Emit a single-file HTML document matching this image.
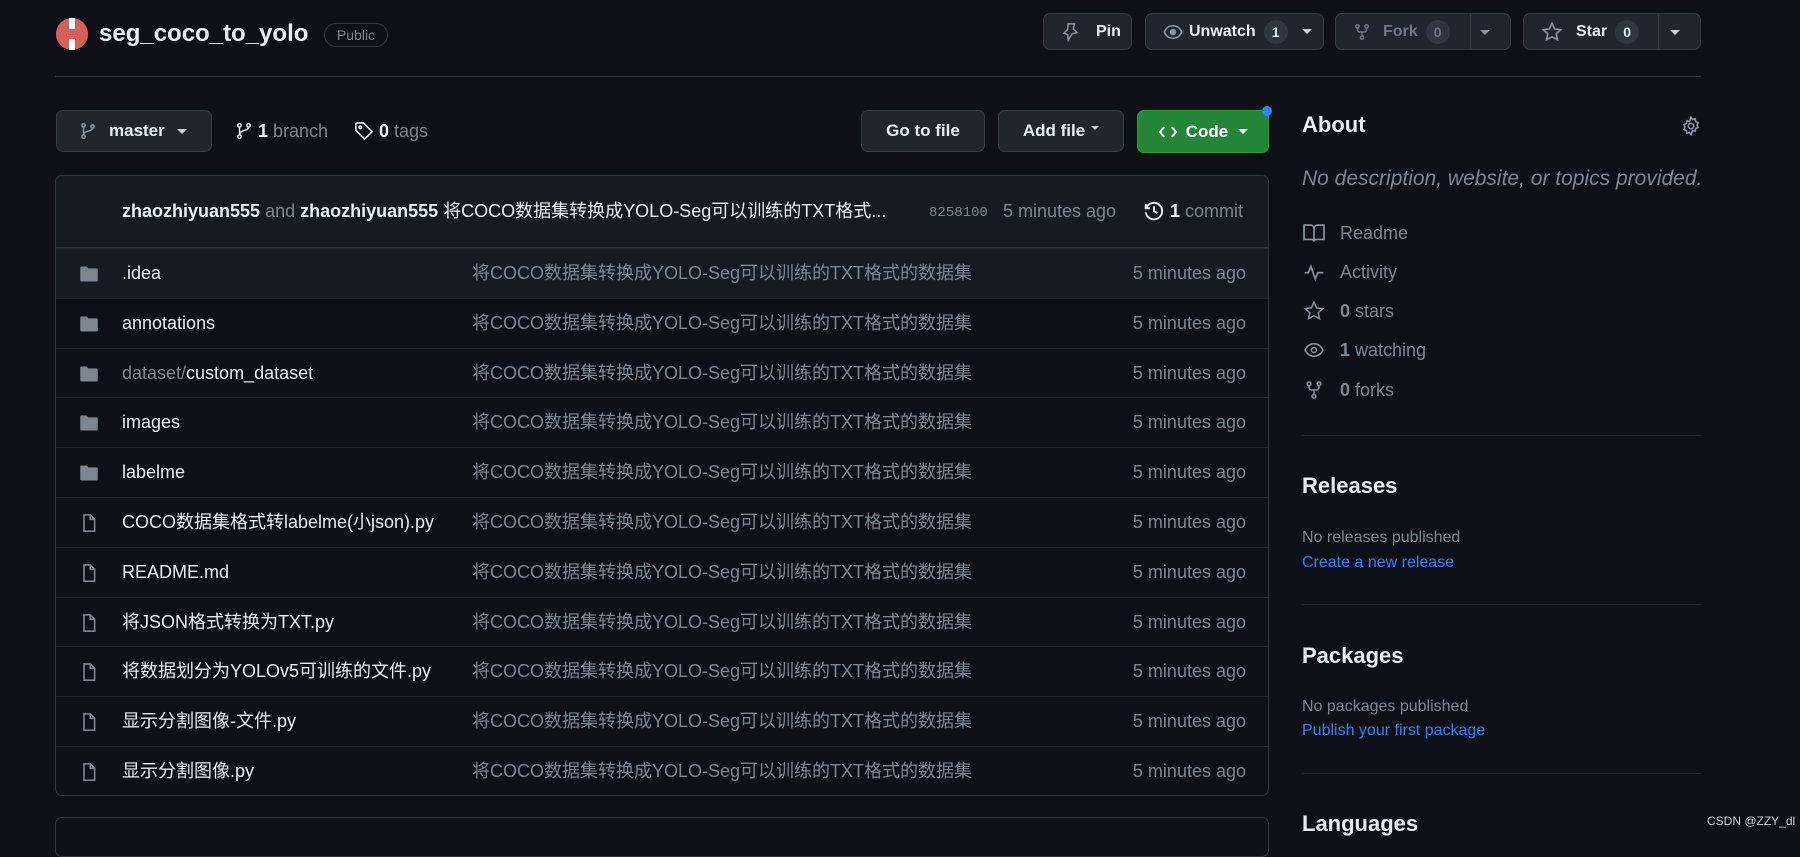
<!DOCTYPE html>
<html><head><meta charset="utf-8"><style>
*{box-sizing:border-box;margin:0;padding:0}
body{width:1800px;height:833px;overflow:hidden;background:#0d1117;color:#e6edf3;font-family:"Liberation Sans","Noto Sans CJK SC",sans-serif;position:relative;line-height:22px}
.a{position:absolute}
.btn{position:absolute;background:#21262d;border:1px solid #363b42;border-radius:7px;display:flex;align-items:center;font-size:16px;font-weight:bold;color:#e6edf3}
.cnt{display:inline-block;background:#30363d;border-radius:12px;min-width:24px;height:24px;line-height:24px;text-align:center;font-size:14px;margin-left:8px}
.caret{width:0;height:0;border-left:5px solid transparent;border-right:5px solid transparent;border-top:5px solid #c9d1d9;display:inline-block}
.box{position:absolute;left:55px;top:175px;width:1214px;height:621px;border:1px solid #30363d;border-radius:7px;overflow:hidden}
.hdr{height:72px;background:#161b22;border-bottom:1px solid #30363d;position:relative;font-size:18px}
.row{height:49.8px;border-top:1px solid #21262d;position:relative;font-size:18px}
.row:first-of-type{border-top:none}
.row .n,.row .m,.row .t{position:absolute;top:13px;height:22px;line-height:22px;white-space:nowrap}
.row .n{left:66px;color:#e6edf3}
.row .m{left:416px;color:#7d8590}
.row .t{right:22px;color:#7d8590}
.row svg{position:absolute;left:22px;top:15px}
.side{position:absolute;left:1302px;font-size:18px;color:#7d8590}
.side svg{position:absolute;left:0;top:1px}
.side span{position:absolute;left:38px;top:0;white-space:nowrap}
.hr{position:absolute;left:1302px;width:399px;height:1px;background:#21262d}
h2{position:absolute;left:1302px;font-size:22px;font-weight:bold;color:#e6edf3}
</style></head><body>
<svg class="a" style="left:56px;top:18px" width="32" height="32" viewBox="0 0 32 32"><circle cx="16" cy="16" r="16" fill="#d9605a"/><rect x="13" y="0" width="6" height="11" fill="#fff"/><rect x="13" y="21" width="6" height="11" fill="#fff"/></svg>
<div class="a" style="left:99px;top:20px;font-size:24px;line-height:28px;font-weight:bold;color:#e6edf3">seg_coco_to_yolo</div>
<div class="a" style="left:324px;top:23px;width:64px;height:24px;border:1px solid #30363d;border-radius:12px;font-size:14px;color:#7d8590;text-align:center;line-height:22px">Public</div>

<div class="btn" style="left:1043px;top:13px;width:89px;height:37px;padding-left:18px"><svg width="20" height="20" viewBox="0 0 16 16" fill="none" stroke="#8b949e" stroke-width="1.2"><path d="M5 1.5l5 0-1 4 3 3-4 1-3 5-0.5-4.5L1.5 9 4.5 6z"/></svg><span style="margin-left:14px">Pin</span></div>
<div class="btn" style="left:1145px;top:13px;width:179px;height:37px;padding-left:17px"><svg width="20" height="20" viewBox="0 0 16 16" fill="none" stroke="#8b949e" stroke-width="1.3"><path d="M1 8c2-4 4-5 7-5s5 1 7 5c-2 4-4 5-7 5s-5-1-7-5z"/><circle cx="8" cy="8" r="2" fill="#8b949e"/></svg><span style="margin-left:6px">Unwatch</span><span class="cnt">1</span><span class="caret" style="margin-left:14px"></span></div>
<div class="btn" style="left:1335px;top:13px;width:176px;height:37px;padding-left:17px;color:#6e7681"><svg width="18" height="20" viewBox="0 0 16 16" fill="none" stroke="#6e7681" stroke-width="1.3"><circle cx="4" cy="3" r="1.5"/><circle cx="12" cy="3" r="1.5"/><circle cx="8" cy="13" r="1.5"/><path d="M4 4.5v1.5c0 1 1 2 2 2h4c1 0 2-1 2-2V4.5M8 8v3.5"/></svg><span style="margin-left:12px">Fork</span><span class="cnt" style="color:#6e7681">0</span><span style="position:absolute;left:77%;top:0;width:1px;height:35px;background:#363b42"></span><span class="caret" style="position:absolute;right:20px;top:16px;border-top-color:#8b949e"></span></div>
<div class="btn" style="left:1523px;top:13px;width:178px;height:37px;padding-left:18px"><svg width="20" height="20" viewBox="0 0 16 16" fill="none" stroke="#8b949e" stroke-width="1.3"><path d="M8 1l2.1 4.5 4.9.6-3.6 3.3 1 4.8L8 11.8 3.6 14.2l1-4.8L1 6.1l4.9-.6z"/></svg><span style="margin-left:14px">Star</span><span class="cnt">0</span><span style="position:absolute;left:76%;top:0;width:1px;height:35px;background:#363b42"></span><span class="caret" style="position:absolute;right:20px;top:16px"></span></div>

<div class="a" style="left:55px;top:76px;width:1646px;height:1px;background:#30363d"></div>

<div class="btn" style="left:56px;top:110px;width:156px;height:42px;padding-left:22px"><svg width="18" height="20" viewBox="0 0 16 16" fill="none" stroke="#8b949e" stroke-width="1.3"><circle cx="4" cy="3" r="1.5"/><circle cx="4" cy="13" r="1.5"/><circle cx="12" cy="4" r="1.5"/><path d="M4 4.5v7M12 5.5c0 3-8 2-8 6"/></svg><span style="margin-left:12px;font-size:17px">master</span><span class="caret" style="margin-left:12px"></span></div>
<div class="a" style="left:235px;top:120px;font-size:18px;color:#7d8590;display:flex;align-items:center"><svg width="18" height="20" viewBox="0 0 16 16" fill="none" stroke="#e6edf3" stroke-width="1.3"><circle cx="4" cy="3" r="1.5"/><circle cx="4" cy="13" r="1.5"/><circle cx="12" cy="3" r="1.5"/><path d="M4 4.5v7M12 4.5c0 4-8 2-8 7"/></svg><b style="color:#e6edf3;margin-left:5px">1</b>&nbsp;branch</div>
<div class="a" style="left:354px;top:120px;font-size:18px;color:#7d8590;display:flex;align-items:center"><svg width="20" height="20" viewBox="0 0 16 16" fill="none" stroke="#e6edf3" stroke-width="1.3"><path d="M1.5 2.5v5l7 7 6-6-7-7h-5z"/><circle cx="5" cy="5" r="1"/></svg><b style="color:#e6edf3;margin-left:5px">0</b>&nbsp;tags</div>

<div class="btn" style="left:861px;top:110px;width:124px;height:42px;justify-content:center;font-size:17px">Go to file</div>
<div class="btn" style="left:998px;top:110px;width:126px;height:42px;justify-content:center;font-size:17px">Add file<span class="caret" style="margin-left:6px;margin-top:-6px;border-width:4px 4px 0 4px"></span></div>
<div class="btn" style="left:1137px;top:110px;width:132px;height:43px;justify-content:center;background:#238636;border-color:#2e9a40;font-size:17px"><svg width="20" height="20" viewBox="0 0 16 16" fill="none" stroke="#fff" stroke-width="1.5"><path d="M5 4L1.5 8 5 12M11 4l3.5 4L11 12"/></svg><span style="margin-left:8px;color:#fff">Code</span><span class="caret" style="margin-left:10px;border-top-color:#fff"></span></div>
<div class="a" style="left:1262px;top:106px;width:10px;height:10px;border-radius:5px;background:#2f81f7"></div>

<div class="box">
<div class="hdr">
<div class="a" style="left:66px;top:24px;white-space:nowrap;height:22px;line-height:22px"><b>zhaozhiyuan555</b> <span style="color:#7d8590">and</span> <b>zhaozhiyuan555</b> 将COCO数据集转换成YOLO-Seg可以训练的TXT格式...</div>
<div class="a" style="left:873px;top:26px;font-family:'Liberation Mono',monospace;font-size:14px;color:#7d8590">8258100</div>
<div class="a" style="left:947px;top:24px;color:#7d8590">5 minutes ago</div>
<svg class="a" style="left:1087px;top:24px" width="22" height="22" viewBox="0 0 16 16" fill="none" stroke="#e6edf3" stroke-width="1.4"><path d="M2 3v3h3"/><path d="M2.3 6A6 6 0 1 1 2 9"/><path d="M8 4.5V8l2.5 1.5"/></svg>
<div class="a" style="left:1114px;top:24px;color:#7d8590"><b style="color:#e6edf3">1</b> commit</div>
</div>
<div class="row" style="background:#161b22"><svg width="22" height="20" viewBox="0 0 16 16"><path d="M1 3c0-.6.4-1 1-1h4l1.5 1.5H14c.6 0 1 .4 1 1V13c0 .6-.4 1-1 1H2c-.6 0-1-.4-1-1z" fill="#7d8590"/></svg><div class="n">.idea</div><div class="m">将COCO数据集转换成YOLO-Seg可以训练的TXT格式的数据集</div><div class="t">5 minutes ago</div></div>
<div class="row"><svg width="22" height="20" viewBox="0 0 16 16"><path d="M1 3c0-.6.4-1 1-1h4l1.5 1.5H14c.6 0 1 .4 1 1V13c0 .6-.4 1-1 1H2c-.6 0-1-.4-1-1z" fill="#7d8590"/></svg><div class="n">annotations</div><div class="m">将COCO数据集转换成YOLO-Seg可以训练的TXT格式的数据集</div><div class="t">5 minutes ago</div></div>
<div class="row"><svg width="22" height="20" viewBox="0 0 16 16"><path d="M1 3c0-.6.4-1 1-1h4l1.5 1.5H14c.6 0 1 .4 1 1V13c0 .6-.4 1-1 1H2c-.6 0-1-.4-1-1z" fill="#7d8590"/></svg><div class="n"><span style="color:#7d8590">dataset/</span>custom_dataset</div><div class="m">将COCO数据集转换成YOLO-Seg可以训练的TXT格式的数据集</div><div class="t">5 minutes ago</div></div>
<div class="row"><svg width="22" height="20" viewBox="0 0 16 16"><path d="M1 3c0-.6.4-1 1-1h4l1.5 1.5H14c.6 0 1 .4 1 1V13c0 .6-.4 1-1 1H2c-.6 0-1-.4-1-1z" fill="#7d8590"/></svg><div class="n">images</div><div class="m">将COCO数据集转换成YOLO-Seg可以训练的TXT格式的数据集</div><div class="t">5 minutes ago</div></div>
<div class="row"><svg width="22" height="20" viewBox="0 0 16 16"><path d="M1 3c0-.6.4-1 1-1h4l1.5 1.5H14c.6 0 1 .4 1 1V13c0 .6-.4 1-1 1H2c-.6 0-1-.4-1-1z" fill="#7d8590"/></svg><div class="n">labelme</div><div class="m">将COCO数据集转换成YOLO-Seg可以训练的TXT格式的数据集</div><div class="t">5 minutes ago</div></div>
<div class="row"><svg width="22" height="20" viewBox="0 0 16 16" fill="none" stroke="#7d8590" stroke-width="1.3"><path d="M4 1.5h5l3.5 3.5v9.5H4z M9 1.5V5h3.5"/></svg><div class="n">COCO数据集格式转labelme(小json).py</div><div class="m">将COCO数据集转换成YOLO-Seg可以训练的TXT格式的数据集</div><div class="t">5 minutes ago</div></div>
<div class="row"><svg width="22" height="20" viewBox="0 0 16 16" fill="none" stroke="#7d8590" stroke-width="1.3"><path d="M4 1.5h5l3.5 3.5v9.5H4z M9 1.5V5h3.5"/></svg><div class="n">README.md</div><div class="m">将COCO数据集转换成YOLO-Seg可以训练的TXT格式的数据集</div><div class="t">5 minutes ago</div></div>
<div class="row"><svg width="22" height="20" viewBox="0 0 16 16" fill="none" stroke="#7d8590" stroke-width="1.3"><path d="M4 1.5h5l3.5 3.5v9.5H4z M9 1.5V5h3.5"/></svg><div class="n">将JSON格式转换为TXT.py</div><div class="m">将COCO数据集转换成YOLO-Seg可以训练的TXT格式的数据集</div><div class="t">5 minutes ago</div></div>
<div class="row"><svg width="22" height="20" viewBox="0 0 16 16" fill="none" stroke="#7d8590" stroke-width="1.3"><path d="M4 1.5h5l3.5 3.5v9.5H4z M9 1.5V5h3.5"/></svg><div class="n">将数据划分为YOLOv5可训练的文件.py</div><div class="m">将COCO数据集转换成YOLO-Seg可以训练的TXT格式的数据集</div><div class="t">5 minutes ago</div></div>
<div class="row"><svg width="22" height="20" viewBox="0 0 16 16" fill="none" stroke="#7d8590" stroke-width="1.3"><path d="M4 1.5h5l3.5 3.5v9.5H4z M9 1.5V5h3.5"/></svg><div class="n">显示分割图像-文件.py</div><div class="m">将COCO数据集转换成YOLO-Seg可以训练的TXT格式的数据集</div><div class="t">5 minutes ago</div></div>
<div class="row"><svg width="22" height="20" viewBox="0 0 16 16" fill="none" stroke="#7d8590" stroke-width="1.3"><path d="M4 1.5h5l3.5 3.5v9.5H4z M9 1.5V5h3.5"/></svg><div class="n">显示分割图像.py</div><div class="m">将COCO数据集转换成YOLO-Seg可以训练的TXT格式的数据集</div><div class="t">5 minutes ago</div></div>
</div>
<div class="a" style="left:55px;top:817px;width:1214px;height:40px;border:1px solid #30363d;border-radius:7px"></div>

<h2 style="top:114px">About</h2>
<svg class="a" style="left:1681px;top:116px" width="20" height="20" viewBox="0 0 16 16" fill="none" stroke="#8b949e" stroke-width="1.3"><circle cx="8" cy="8" r="2.2"/><path d="M8 1l1.2 1.8 2.1-.6.4 2.1 2 .9-.9 2 .9 2-2 .9-.4 2.1-2.1-.6L8 15l-1.2-1.8-2.1.6-.4-2.1-2-.9.9-2-.9-2 2-.9.4-2.1 2.1.6z"/></svg>
<div class="a" style="left:1302px;top:168px;font-size:21px;font-style:italic;color:#7d8590;white-space:nowrap">No description, website, or topics provided.</div>
<div class="side" style="top:222px"><svg width="24" height="20" viewBox="0 0 16 14" fill="none" stroke="#8b949e" stroke-width="1.2"><path d="M1 1.5h4.5c1.5 0 2.5 1 2.5 2.5v9c0-1-1-1.5-2-1.5H1zM15 1.5h-4.5C9 1.5 8 2.5 8 4v9c0-1 1-1.5 2-1.5h5z"/></svg><span>Readme</span></div>
<div class="side" style="top:261px"><svg width="24" height="20" viewBox="0 0 16 16" fill="none" stroke="#8b949e" stroke-width="1.3"><path d="M0.5 8.5h3l2-5 3.5 10 2-5h4.5"/></svg><span>Activity</span></div>
<div class="side" style="top:300px"><svg width="24" height="20" viewBox="0 0 16 16" fill="none" stroke="#8b949e" stroke-width="1.2"><path d="M8 1l2.1 4.5 4.9.6-3.6 3.3 1 4.8L8 11.8 3.6 14.2l1-4.8L1 6.1l4.9-.6z"/></svg><span><b>0</b> stars</span></div>
<div class="side" style="top:339px"><svg width="24" height="20" viewBox="0 0 16 16" fill="none" stroke="#8b949e" stroke-width="1.2"><path d="M0.8 8c2-4 4.5-5 7.2-5s5.2 1 7.2 5c-2 4-4.5 5-7.2 5S2.8 12 0.8 8z"/><circle cx="8" cy="8" r="2"/></svg><span><b>1</b> watching</span></div>
<div class="side" style="top:379px"><svg width="24" height="20" viewBox="0 0 16 16" fill="none" stroke="#8b949e" stroke-width="1.2"><circle cx="4" cy="3" r="1.5"/><circle cx="12" cy="3" r="1.5"/><circle cx="8" cy="13" r="1.5"/><path d="M4 4.5v1.5c0 1 1 2 2 2h4c1 0 2-1 2-2V4.5M8 8v3.5"/></svg><span><b>0</b> forks</span></div>
<div class="hr" style="top:435px"></div>
<h2 style="top:475px">Releases</h2>
<div class="a" style="left:1302px;top:527px;font-size:16px;color:#7d8590">No releases published</div>
<div class="a" style="left:1302px;top:552px;font-size:16px;color:#2f81f7">Create a new release</div>
<div class="hr" style="top:604px"></div>
<h2 style="top:645px">Packages</h2>
<div class="a" style="left:1302px;top:696px;font-size:16px;color:#7d8590">No packages published</div>
<div class="a" style="left:1302px;top:720px;font-size:16px;color:#2f81f7">Publish your first package</div>
<div class="hr" style="top:773px"></div>
<h2 style="top:813px">Languages</h2>
<div class="a" style="left:1707px;top:810px;font-size:12px;color:#c9d1d9">CSDN @ZZY_dl</div>
</body></html>
